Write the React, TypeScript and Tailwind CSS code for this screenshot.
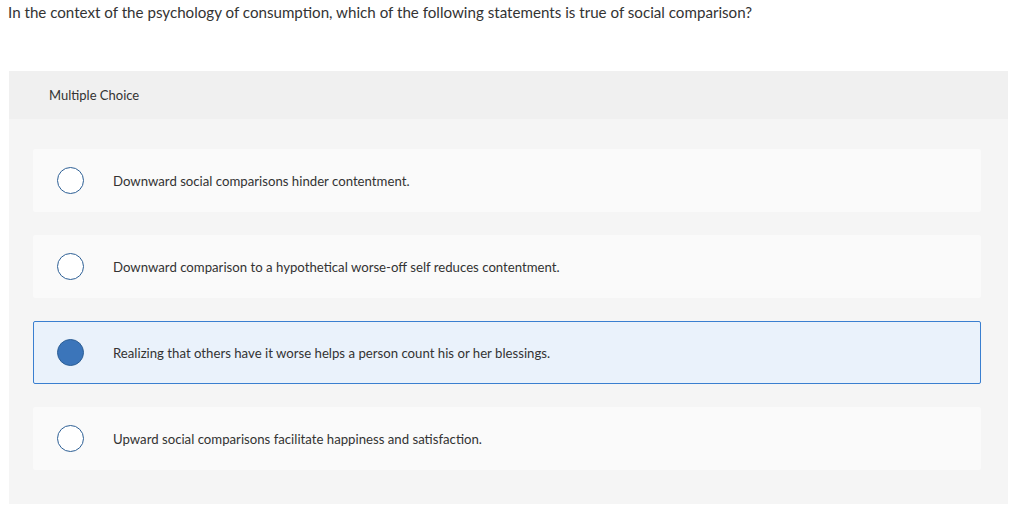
import React from "react";

const options = [
  "Downward social comparisons hinder contentment.",
  "Downward comparison to a hypothetical worse-off self reduces contentment.",
  "Realizing that others have it worse helps a person count his or her blessings.",
  "Upward social comparisons facilitate happiness and satisfaction.",
];

export default function App() {
  const selected = 2;
  return (
    <div className="w-[1024px] h-[514px] bg-white text-[#333] font-['Lato',sans-serif] overflow-hidden">
      <div className="px-[8px] pt-[3px] h-[71px] text-[15.15px] leading-[18px]">
        In the context of the psychology of consumption, which of the following statements is true of social comparison?
      </div>
      <div className="ml-[9px] w-[999px] bg-[#f5f5f5] rounded-t-[2px]">
        <div className="h-[48px] bg-[#f0f0f0] flex items-center pl-[40px] pt-[2px] text-[13px]">
          Multiple Choice
        </div>
        <div className="pt-[30px] pb-[34px] pl-[24px] pr-[27px] flex flex-col gap-[23px]">
          {options.map((o, i) => {
            const sel = i === selected;
            return (
              <div
                key={i}
                className={
                  sel
                    ? "h-[63px] rounded-[2px] border border-[#3a7fd0] bg-[#eaf2fb] flex items-center pl-[23px] text-[13.2px]"
                    : "h-[63px] rounded-[2px] border border-transparent bg-[#fafafa] flex items-center pl-[23px] text-[13.2px]"
                }
              >
                <span
                  className={
                    sel
                      ? "w-[27px] h-[27px] rounded-full border border-[#2d5f95] bg-[#3b75ba] shrink-0"
                      : "w-[27px] h-[27px] rounded-full border border-[#2d5f95] bg-white shrink-0"
                  }
                />
                <span className="ml-[29px] pt-[2px]">{o}</span>
              </div>
            );
          })}
        </div>
      </div>
    </div>
  );
}
